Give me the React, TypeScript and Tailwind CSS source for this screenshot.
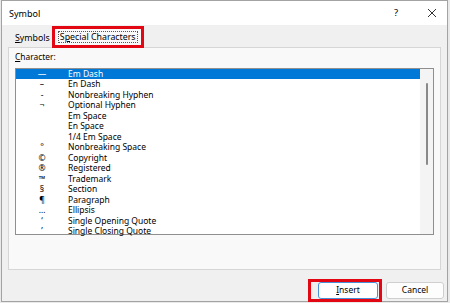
import React from 'react'

// ── Data ─────────────────────────────────────────────────────────────────────

const ROWS: [string, string][] = [
  ['—', 'Em Dash'],
  ['–', 'En Dash'],
  ['-', 'Nonbreaking Hyphen'],
  ['¬', 'Optional Hyphen'],
  ['', 'Em Space'],
  ['', 'En Space'],
  ['', '1/4 Em Space'],
  ['°', 'Nonbreaking Space'],
  ['©', 'Copyright'],
  ['®', 'Registered'],
  ['™', 'Trademark'],
  ['§', 'Section'],
  ['¶', 'Paragraph'],
  ['…', 'Ellipsis'],
  ['‘', 'Single Opening Quote'],
  ['’', 'Single Closing Quote'],
]

// ── Component ────────────────────────────────────────────────────────────────

export default function App() {
  return (
    <div className="w-[450px] h-[303px] bg-[#e9e9e9] overflow-hidden font-['Noto_Sans','Open_Sans',sans-serif] text-black">
      <div className="ml-[1px] w-[447px] h-[302px] border border-[#a3a3a3] bg-[#f0f0f0] flex flex-col">

        {/* Title bar */}
        <div className="h-[24px] bg-white flex items-center shrink-0">
          <span className="pl-[7px] text-[9px] leading-none">Symbol</span>
          <span className="ml-auto text-[9.5px] leading-none mr-[29px]">?</span>
          <svg width="10" height="10" viewBox="0 0 10 10" className="mr-[10px]">
            <path d="M1 1 L9 9 M9 1 L1 9" stroke="#333" strokeWidth="1" />
          </svg>
        </div>

        {/* Tabs */}
        <div className="h-[22px] flex items-end pl-[7px] shrink-0 text-[8.8px] leading-none">
          <div className="h-[15px] px-[6px] flex items-center mb-[1px]">
            <span><u>S</u>ymbols</span>
          </div>
          <div className="border-[3px] border-[#e30613] ml-[-4px] mb-[-1px] relative z-10">
            <div className="h-[16px] px-[3px] bg-[#f9f9f9] flex items-center">
              <span className="border border-dotted border-[#555] px-[1px] py-[1px]">
                S<u>p</u>ecial Characters
              </span>
            </div>
          </div>
        </div>

        {/* Panel */}
        <div className="mx-[6px] h-[223px] border border-[#d6d6d6] bg-[#f9f9f9] px-[6px] pt-[5px] shrink-0">
          <div className="text-[8.4px] leading-none h-[15px]"><u>C</u>haracter:</div>
          <div className="h-[167px] border border-[#8f8f8f] bg-white flex">
            <div className="flex-1">
              {ROWS.map(([sym, name], i) => (
                <div
                  key={name}
                  className={[
                    'h-[10.47px] flex items-center text-[8.5px] leading-none',
                    i === 0 ? 'bg-[#0078d7] text-white' : '',
                  ].join(' ')}
                >
                  <span className="w-[52px] text-center">{sym}</span>
                  <span>{name}</span>
                </div>
              ))}
            </div>
            {/* Scrollbar */}
            <div className="w-[13px] bg-[#f4f4f4] flex justify-center pt-[14px]">
              <div className="w-[2px] h-[82px] bg-[#8a8a8a] rounded-full" />
            </div>
          </div>
        </div>

        {/* Buttons */}
        <div className="flex justify-end items-start pr-[3px] pt-[9px] text-[8.5px]">
          <div className="border-[3px] border-[#e30613] pl-[7px] pr-[1px] mr-[4px]">
            <button className="w-[60px] h-[17px] bg-white border border-[#4a90d9] rounded-[3px] leading-none">
              <u>I</u>nsert
            </button>
          </div>
          <button className="w-[58px] h-[17px] mt-[3px] bg-[#fdfdfd] border border-[#cfcfcf] rounded-[3px] leading-none">
            Cancel
          </button>
        </div>
      </div>
    </div>
  )
}
